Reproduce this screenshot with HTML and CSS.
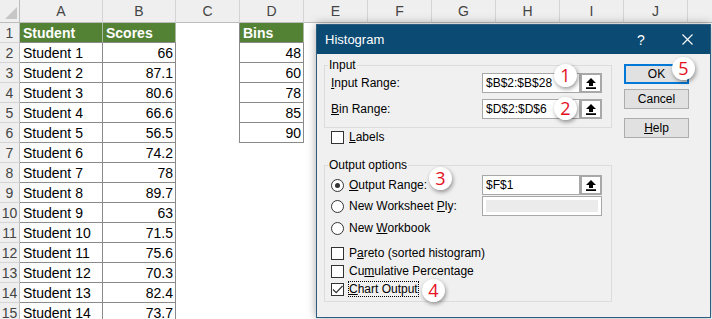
FILE: index.html
```html
<!DOCTYPE html>
<html lang="en">
<head>
  <meta charset="UTF-8" />
  <title>Histogram</title>
  <link rel="stylesheet" href="styles.css">
</head>
<body>
  <div class="sheet">
    <div class="hd corner"><span class="tri"></span></div>
    <div class="hd">A</div><div class="hd">B</div><div class="hd">C</div><div class="hd">D</div>
    <div class="hd">E</div><div class="hd">F</div><div class="hd">G</div><div class="hd">H</div>
    <div class="hd">I</div><div class="hd">J</div><div class="hd last"></div>

    <div class="rh">1</div><div class="c head">Student</div><div class="c head">Scores</div><div class="edge"></div><div class="c head">Bins</div><div class="rest"></div>
    <div class="rh">2</div><div class="c">Student 1</div><div class="c num">66</div><div class="edge"></div><div class="c num">48</div><div class="rest"></div>
    <div class="rh">3</div><div class="c">Student 2</div><div class="c num">87.1</div><div class="edge"></div><div class="c num">60</div><div class="rest"></div>
    <div class="rh">4</div><div class="c">Student 3</div><div class="c num">80.6</div><div class="edge"></div><div class="c num">78</div><div class="rest"></div>
    <div class="rh">5</div><div class="c">Student 4</div><div class="c num">66.6</div><div class="edge"></div><div class="c num">85</div><div class="rest"></div>
    <div class="rh">6</div><div class="c">Student 5</div><div class="c num">56.5</div><div class="edge"></div><div class="c num">90</div><div class="rest"></div>
    <div class="rh">7</div><div class="c">Student 6</div><div class="c num">74.2</div><div class="blank"></div><div class="blank"></div><div class="rest"></div>
    <div class="rh">8</div><div class="c">Student 7</div><div class="c num">78</div><div class="blank"></div><div class="blank"></div><div class="rest"></div>
    <div class="rh">9</div><div class="c">Student 8</div><div class="c num">89.7</div><div class="blank"></div><div class="blank"></div><div class="rest"></div>
    <div class="rh">10</div><div class="c">Student 9</div><div class="c num">63</div><div class="blank"></div><div class="blank"></div><div class="rest"></div>
    <div class="rh">11</div><div class="c">Student 10</div><div class="c num">71.5</div><div class="blank"></div><div class="blank"></div><div class="rest"></div>
    <div class="rh">12</div><div class="c">Student 11</div><div class="c num">75.6</div><div class="blank"></div><div class="blank"></div><div class="rest"></div>
    <div class="rh">13</div><div class="c">Student 12</div><div class="c num">70.3</div><div class="blank"></div><div class="blank"></div><div class="rest"></div>
    <div class="rh">14</div><div class="c">Student 13</div><div class="c num">82.4</div><div class="blank"></div><div class="blank"></div><div class="rest"></div>
    <div class="rh">15</div><div class="c">Student 14</div><div class="c num">73.7</div><div class="blank"></div><div class="blank"></div><div class="rest"></div>
  </div>

  <div class="dialog">
    <div class="titlebar">
      <span class="title">Histogram</span>
      <span class="tb-btn">?</span>
      <span class="tb-btn">
        <svg width="11" height="11" viewBox="0 0 11 11"><path d="M0.5 0.5 L10.5 10.5 M10.5 0.5 L0.5 10.5" stroke="#fff" stroke-width="1.1" fill="none"/></svg>
      </span>
    </div>

    <div class="dialog-body">
      <div class="options">
        <fieldset class="group group-input">
          <legend>Input</legend>
          <div class="range-row">
            <span><u>I</u>nput Range:</span>
            <span class="field">$B$2:$B$28</span>
            <span class="ref-btn"><svg width="10" height="11" viewBox="0 0 10 11"><path d="M5 0 L10 5 L7 5 L7 8 L3 8 L3 5 L0 5 Z M0 9.3 H10 V11 H0 Z" fill="#000"/></svg></span>
          </div>
          <div class="range-row second">
            <span><u>B</u>in Range:</span>
            <span class="field">$D$2:$D$6</span>
            <span class="ref-btn"><svg width="10" height="11" viewBox="0 0 10 11"><path d="M5 0 L10 5 L7 5 L7 8 L3 8 L3 5 L0 5 Z M0 9.3 H10 V11 H0 Z" fill="#000"/></svg></span>
          </div>
        </fieldset>

        <div class="check-row labels-row">
          <span class="box"></span><span><u>L</u>abels</span>
        </div>

        <fieldset class="group group-output">
          <legend>Output options</legend>
          <div class="range-row out-first">
            <span class="opt"><span class="radio on"></span><span><u>O</u>utput Range:</span></span>
            <span class="field">$F$1</span>
            <span class="ref-btn"><svg width="10" height="11" viewBox="0 0 10 11"><path d="M5 0 L10 5 L7 5 L7 8 L3 8 L3 5 L0 5 Z M0 9.3 H10 V11 H0 Z" fill="#000"/></svg></span>
          </div>
          <div class="range-row out-second">
            <span class="opt"><span class="radio"></span><span>New Worksheet <u>P</u>ly:</span></span>
            <span class="field disabled"></span>
          </div>
          <div class="range-row out-third">
            <span class="opt"><span class="radio"></span><span>New <u>W</u>orkbook</span></span>
          </div>

          <div class="check-row first-check">
            <span class="box"></span><span>P<u>a</u>reto (sorted histogram)</span>
          </div>
          <div class="check-row">
            <span class="box"></span><span>Cu<u>m</u>ulative Percentage</span>
          </div>
          <div class="check-row">
            <span class="box"><svg width="11" height="11" viewBox="0 0 11 11"><path d="M1 5.5 L4.2 8.7 L10.5 2" stroke="#333" stroke-width="1.2" fill="none"/></svg></span>
            <span class="focus"><u>C</u>hart Output</span>
          </div>
        </fieldset>
      </div>

      <div class="buttons">
        <button class="btn btn-ok">OK</button>
        <button class="btn">Cancel</button>
        <button class="btn btn-help"><u>H</u>elp</button>
      </div>
    </div>

    <span class="badge b1">1</span>
    <span class="badge b2">2</span>
    <span class="badge b3">3</span>
    <span class="badge b4">4</span>
    <span class="badge b5">5</span>
  </div>
</body>
</html>
```

FILE: styles.css
```css
* {
  box-sizing: border-box;
}

body {
  position: relative;
  width: 712px;
  height: 319px;
  margin: 0;
  overflow: hidden;
  background: #fff;
  font-family: "Liberation Sans", Arial, sans-serif;
}

/* spreadsheet */

.sheet {
  display: grid;
  grid-template-columns: 20px 83px 73px 64px 64px 64px 64px 64px 64px 64px 64px 1fr;
  grid-template-rows: 23px;
  grid-auto-rows: 20px;
  font-size: 14px;
  color: #000;
}

.hd {
  background: #efefef;
  border-right: 1px solid #d4d4d4;
  border-bottom: 1px solid #bdbdbd;
  color: #444;
  text-align: center;
  line-height: 22px;
}

.hd.last {
  border-right: none;
}

.corner {
  position: relative;
  border-right-color: #bdbdbd;
}

.tri {
  position: absolute;
  right: 2px;
  bottom: 3px;
  width: 0;
  height: 0;
  border-left: 12px solid transparent;
  border-bottom: 12px solid #c6c6c6;
}

.rh {
  background: #efefef;
  border-right: 1px solid #bdbdbd;
  border-bottom: 1px solid #d4d4d4;
  color: #444;
  text-align: center;
  line-height: 20px;
}

.c {
  border-right: 1px solid #8a8a8a;
  border-bottom: 1px solid #8a8a8a;
  padding: 1px 3px 0;
  line-height: 19px;
  white-space: nowrap;
}

.num {
  text-align: right;
  padding-right: 2px;
}

.head {
  background: #548235;
  color: #fff;
  font-weight: bold;
  border-right-color: #a9b9a0;
}

.edge {
  border-right: 1px solid #8a8a8a;
}

.rest {
  grid-column: span 7;
}

/* dialog */

.dialog {
  position: absolute;
  left: 316px;
  top: 24px;
  width: 395px;
  height: 294px;
  background: #f0f0f0;
  border: 1px solid #2c5c80;
  box-shadow: 0 0 9px rgba(0, 0, 0, 0.35);
  font-size: 12px;
  color: #000;
}

.titlebar {
  display: flex;
  align-items: center;
  height: 29px;
  padding-left: 8px;
  background: #0b4a72;
  color: #fff;
  font-size: 13px;
}

.title {
  flex: 1;
}

.tb-btn {
  display: flex;
  justify-content: center;
  align-items: center;
  width: 46px;
  height: 29px;
  font-size: 14px;
}

.dialog-body {
  display: flex;
  padding: 4px 0 0 7px;
}

.options {
  width: 288px;
}

.group {
  margin: 0;
  min-width: 0;
  border: 1px solid #dcdcdc;
}

.group legend {
  margin-left: -3px;
  padding: 0 1px;
  line-height: 14px;
}

.group-input {
  padding: 0 9px 8px 6px;
}

.group-output {
  margin-top: 14px;
  padding: 0 9px 3px 6px;
}

.range-row {
  display: grid;
  grid-template-columns: 151px 98px 22px;
  align-items: center;
  height: 20px;
  margin-top: 1px;
}

.range-row.second {
  margin-top: 6px;
}

.out-first {
  margin-top: 3px;
}

.out-second {
  margin-top: 1px;
}

.out-third {
  margin-top: 2px;
}

.field {
  height: 20px;
  padding-left: 3px;
  background: #fff;
  border: 1px solid #a8a8a8;
  line-height: 18px;
}

.field.disabled {
  grid-column: span 2;
  background: #ebebeb;
  box-shadow: inset 0 0 0 3px #fff;
}

.ref-btn {
  display: flex;
  justify-content: center;
  align-items: center;
  height: 20px;
  background: #fff;
  border: 2px solid #a8a8a8;
}

.opt {
  display: flex;
  align-items: center;
  gap: 5px;
}

.radio {
  position: relative;
  width: 13px;
  height: 13px;
  background: #fff;
  border: 1px solid #333;
  border-radius: 50%;
}

.radio.on::after {
  content: "";
  position: absolute;
  left: 3px;
  top: 3px;
  width: 5px;
  height: 5px;
  border-radius: 50%;
  background: #333;
}

.check-row {
  display: flex;
  align-items: center;
  gap: 5px;
  height: 18px;
}

.labels-row {
  height: 14px;
  margin: 2px 0 0 7px;
}

.first-check {
  margin-top: 6px;
}

.box {
  display: flex;
  justify-content: center;
  align-items: center;
  width: 13px;
  height: 13px;
  background: #fff;
  border: 1px solid #333;
}

.focus {
  display: inline-block;
  line-height: 14px;
  outline: 1px dotted #000;
}

.buttons {
  display: flex;
  flex-direction: column;
  width: 65px;
  margin: 6px 0 0 12px;
}

.btn {
  height: 20px;
  padding: 0;
  background: #e1e1e1;
  border: 1px solid #adadad;
  font: inherit;
  color: #000;
}

.btn + .btn {
  margin-top: 5px;
}

.btn-ok {
  border: 2px solid #0078d7;
}

.buttons .btn-help {
  margin-top: 9px;
}

/* numbered callouts */

.badge {
  position: absolute;
  width: 23px;
  height: 23px;
  border-radius: 50%;
  background: #fff;
  box-shadow: 1px 2px 4px rgba(0, 0, 0, 0.4);
  color: #e3101e;
  font-family: "Open Sans", sans-serif;
  font-size: 18px;
  line-height: 23px;
  text-align: center;
}

.b1 { left: 237px; top: 39px; }
.b2 { left: 237px; top: 72px; }
.b3 { left: 112px; top: 142px; }
.b4 { left: 105px; top: 254px; }
.b5 { left: 355px; top: 32px; }
```
